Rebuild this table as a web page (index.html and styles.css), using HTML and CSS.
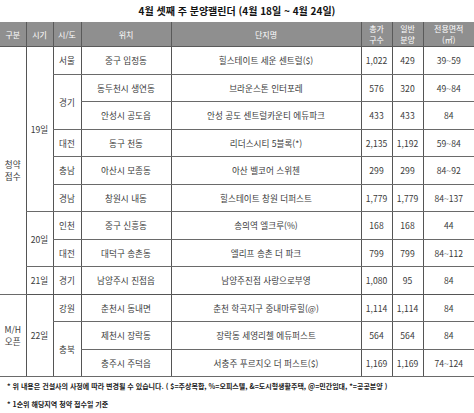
FILE: index.html
```html
<!DOCTYPE html>
<html lang="ko">
<head>
<meta charset="utf-8">
<title>4월 셋째 주 분양캘린더</title>
<link rel="stylesheet" href="styles.css">
</head>
<body>
<div class="page">
  <h1 class="title">4월 셋째 주 분양캘린더 (4월 18일 ~ 4월 24일)</h1>
  <table class="cal">
    <colgroup>
      <col class="c-gubun"><col class="c-date"><col class="c-sido"><col class="c-loc"><col class="c-name"><col class="c-total"><col class="c-sale"><col class="c-area">
    </colgroup>
    <thead>
      <tr>
        <th>구분</th><th>시기</th><th>시/도</th><th>위치</th><th>단지명</th><th>총가<br>구수</th><th>일반<br>분양</th><th>전용면적<br>(㎡)</th>
      </tr>
    </thead>
    <tbody>
      <tr>
        <td rowspan="9" class="group">청약<br>접수</td>
        <td rowspan="6">19일</td>
        <td>서울</td><td>중구 입정동</td><td>힐스테이트 세운 센트럴($)</td><td>1,022</td><td>429</td><td>39~59</td>
      </tr>
      <tr>
        <td rowspan="2">경기</td><td>동두천시 생연동</td><td>브라운스톤 인터포레</td><td>576</td><td>320</td><td>49~84</td>
      </tr>
      <tr>
        <td>안성시 공도읍</td><td>안성 공도 센트럴카운티 에듀파크</td><td>433</td><td>433</td><td>84</td>
      </tr>
      <tr>
        <td>대전</td><td>동구 천동</td><td>리더스시티 5블록(*)</td><td>2,135</td><td>1,192</td><td>59~84</td>
      </tr>
      <tr>
        <td>충남</td><td>아산시 모종동</td><td>아산 벨코어 스위첸</td><td>299</td><td>299</td><td>84~92</td>
      </tr>
      <tr>
        <td>경남</td><td>창원시 내동</td><td>힐스테이트 창원 더퍼스트</td><td>1,779</td><td>1,779</td><td>84~137</td>
      </tr>
      <tr>
        <td rowspan="2">20일</td>
        <td>인천</td><td>중구 신흥동</td><td>송의역 엘크루(%)</td><td>168</td><td>168</td><td>44</td>
      </tr>
      <tr>
        <td>대전</td><td>대덕구 송촌동</td><td>엘리프 송촌 더 파크</td><td>799</td><td>799</td><td>84~112</td>
      </tr>
      <tr class="group-end">
        <td>21일</td>
        <td>경기</td><td>남양주시 진접읍</td><td>남양주진접 사랑으로부영</td><td>1,080</td><td>95</td><td>84</td>
      </tr>
      <tr>
        <td rowspan="3" class="group">M/H<br>오픈</td>
        <td rowspan="3">22일</td>
        <td>강원</td><td>춘천시 동내면</td><td>춘천 학곡지구 중내마루힐(@)</td><td>1,114</td><td>1,114</td><td>84</td>
      </tr>
      <tr>
        <td rowspan="2">충북</td><td>제천시 장락동</td><td>장락동 세영리첼 에듀퍼스트</td><td>564</td><td>564</td><td>84</td>
      </tr>
      <tr>
        <td>충주시 주덕읍</td><td>서충주 푸르지오 더 퍼스트($)</td><td>1,169</td><td>1,169</td><td>74~124</td>
      </tr>
    </tbody>
  </table>
  <div class="notes">
    <p>* 위 내용은 건설사의 사정에 따라 변경될 수 있습니다. ( $=주상복합, %=오피스텔, &amp;=도시형생활주택, @=민간임대, *=공공분양 )</p>
    <p>* 1순위 해당지역 청약 접수일 기준</p>
  </div>
</div>
</body>
</html>
```

FILE: styles.css
```css
html, body {
  margin: 0;
  padding: 0;
  background: #ffffff;
}

.page {
  width: 474px;
  font-family: "Noto Sans CJK KR", "Noto Sans", sans-serif;
  color: #3b3b3b;
}

.title {
  margin: 0;
  height: 22px;
  line-height: 22px;
  font-size: 10px;
  font-weight: 700;
  text-align: center;
  color: #111111;
}

.cal {
  width: 474px;
  table-layout: fixed;
  border-collapse: collapse;
  font-size: 8.6px;
}

.c-gubun { width: 26px; }
.c-date { width: 27px; }
.c-sido { width: 28px; }
.c-loc { width: 90px; }
.c-name { width: 190px; }
.c-total { width: 31px; }
.c-sale { width: 31px; }
.c-area { width: 51px; }

.cal th {
  background: #8f8f8f;
  color: #ffffff;
  font-weight: 400;
  font-size: 8px;
  line-height: 11px;
  height: 24px;
  padding: 0;
  text-align: center;
  vertical-align: middle;
  border-left: 1px solid #5a5a5a;
  border-bottom: 1px solid #5a5a5a;
}

.cal th:first-child {
  border-left: none;
}

.cal td {
  height: 26.5px;
  padding: 0;
  text-align: center;
  vertical-align: middle;
  line-height: 12px;
  white-space: nowrap;
  border-left: 1px solid #555555;
  border-bottom: 1px solid #6a6a6a;
}

.cal td.group {
  border-left: none;
}

.cal .group-end td {
  border-bottom: 1px solid #555555;
}

.notes {
  margin-top: 3px;
  font-size: 7px;
  font-weight: 700;
  color: #222222;
}

.notes p {
  margin: 0 0 0 7px;
  height: 18px;
  line-height: 12px;
  white-space: nowrap;
}
```
